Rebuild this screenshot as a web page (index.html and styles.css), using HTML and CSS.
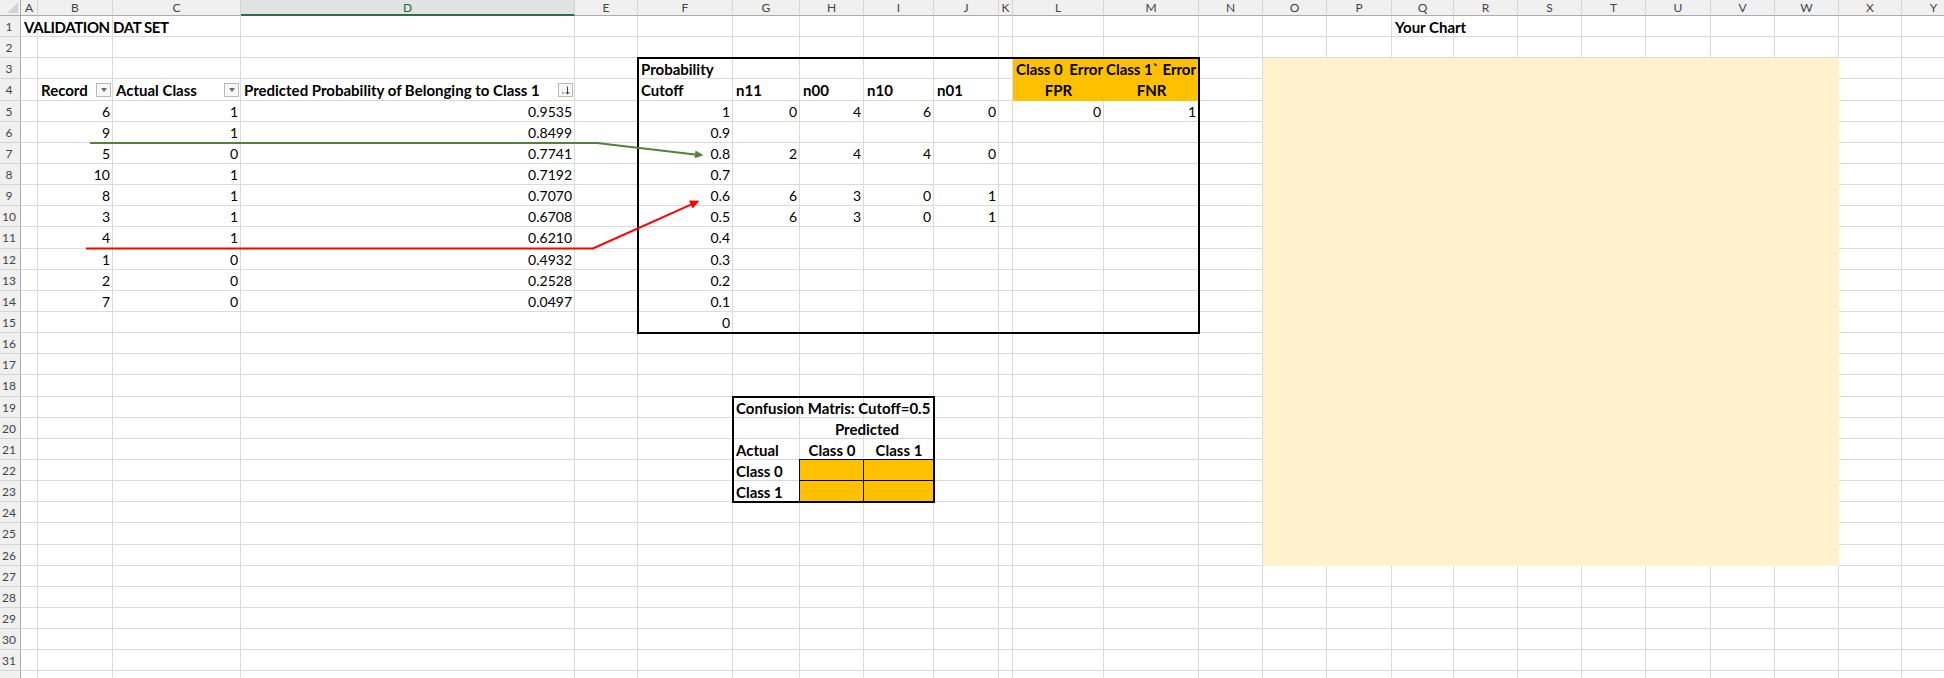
FILE: index.html
```html
<!DOCTYPE html>
<html lang="en">
<head>
<meta charset="utf-8">
<title>Validation data set</title>
<link rel="stylesheet" href="styles.css">
</head>
<body>
<div class="wrap">
<div class="sheet">
  <div class="corner"></div>
  <div class="ch cA">A</div><div class="ch cB">B</div><div class="ch cC">C</div><div class="ch cD sel">D</div><div class="ch cE">E</div><div class="ch cF">F</div><div class="ch cG">G</div><div class="ch cH">H</div><div class="ch cI">I</div><div class="ch cJ">J</div><div class="ch cK">K</div><div class="ch cL">L</div><div class="ch cM">M</div><div class="ch cN">N</div><div class="ch cO">O</div><div class="ch cP">P</div><div class="ch cQ">Q</div><div class="ch cR">R</div><div class="ch cS">S</div><div class="ch cT">T</div><div class="ch cU">U</div><div class="ch cV">V</div><div class="ch cW">W</div><div class="ch cX">X</div><div class="ch cY">Y</div>

  <div class="rh r1">1</div><div class="rh r2">2</div><div class="rh r3">3</div><div class="rh r4">4</div><div class="rh r5">5</div><div class="rh r6">6</div><div class="rh r7">7</div><div class="rh r8">8</div><div class="rh r9">9</div><div class="rh r10">10</div><div class="rh r11">11</div><div class="rh r12">12</div><div class="rh r13">13</div><div class="rh r14">14</div><div class="rh r15">15</div><div class="rh r16">16</div><div class="rh r17">17</div><div class="rh r18">18</div><div class="rh r19">19</div><div class="rh r20">20</div><div class="rh r21">21</div><div class="rh r22">22</div><div class="rh r23">23</div><div class="rh r24">24</div><div class="rh r25">25</div><div class="rh r26">26</div><div class="rh r27">27</div><div class="rh r28">28</div><div class="rh r29">29</div><div class="rh r30">30</div><div class="rh r31">31</div><div class="rh r32"></div>

  <div class="hl r1"></div><div class="hl r2"></div><div class="hl r3"></div><div class="hl r4"></div><div class="hl r5"></div><div class="hl r6"></div><div class="hl r7"></div><div class="hl r8"></div><div class="hl r9"></div><div class="hl r10"></div><div class="hl r11"></div><div class="hl r12"></div><div class="hl r13"></div><div class="hl r14"></div><div class="hl r15"></div><div class="hl r16"></div><div class="hl r17"></div><div class="hl r18"></div><div class="hl r19"></div><div class="hl r20"></div><div class="hl r21"></div><div class="hl r22"></div><div class="hl r23"></div><div class="hl r24"></div><div class="hl r25"></div><div class="hl r26"></div><div class="hl r27"></div><div class="hl r28"></div><div class="hl r29"></div><div class="hl r30"></div><div class="hl r31"></div><div class="hl r32"></div>

  <div class="vl cA"></div><div class="vl cB"></div><div class="vl cC"></div><div class="vl cD"></div><div class="vl cE"></div><div class="vl cF"></div><div class="vl cG"></div><div class="vl cH"></div><div class="vl cI"></div><div class="vl cJ"></div><div class="vl cK"></div><div class="vl cL"></div><div class="vl cM"></div><div class="vl cN"></div><div class="vl cO"></div><div class="vl cP"></div><div class="vl cQ"></div><div class="vl cR"></div><div class="vl cS"></div><div class="vl cT"></div><div class="vl cU"></div><div class="vl cV"></div><div class="vl cW"></div><div class="vl cX"></div><div class="vl cY"></div>

  <div class="chart"></div>
  <div class="orange"></div>
  <div class="ocell r22 cH"></div><div class="ocell r22 cI"></div>
  <div class="ocell r23 cH"></div><div class="ocell r23 cI"></div>

  <div class="c b title r1 cA">VALIDATION DAT SET</div>
  <div class="c b r1 cQ">Your Chart</div>

  <div class="c b hd r4 cB"><span>Record</span><span class="fbtn"></span></div>
  <div class="c b hd r4 cC"><span>Actual Class</span><span class="fbtn"></span></div>
  <div class="c b hd r4 cD"><span>Predicted Probability of Belonging to Class 1</span><span class="sbtn"><svg width="9" height="9" viewBox="0 0 9 9"><path d="M0.5 6.5 L3.5 6.5 L2 8 Z" fill="#707070"/><path d="M6.5 0.5 V8" stroke="#404040" stroke-width="1" fill="none"/><path d="M4.8 6 L6.5 8.2 L8.2 6" stroke="#404040" stroke-width="1" fill="none"/></svg></span></div>

  <div class="c n r5 cB">6</div><div class="c n r5 cC">1</div><div class="c n r5 cD">0.9535</div>
  <div class="c n r6 cB">9</div><div class="c n r6 cC">1</div><div class="c n r6 cD">0.8499</div>
  <div class="c n r7 cB">5</div><div class="c n r7 cC">0</div><div class="c n r7 cD">0.7741</div>
  <div class="c n r8 cB">10</div><div class="c n r8 cC">1</div><div class="c n r8 cD">0.7192</div>
  <div class="c n r9 cB">8</div><div class="c n r9 cC">1</div><div class="c n r9 cD">0.7070</div>
  <div class="c n r10 cB">3</div><div class="c n r10 cC">1</div><div class="c n r10 cD">0.6708</div>
  <div class="c n r11 cB">4</div><div class="c n r11 cC">1</div><div class="c n r11 cD">0.6210</div>
  <div class="c n r12 cB">1</div><div class="c n r12 cC">0</div><div class="c n r12 cD">0.4932</div>
  <div class="c n r13 cB">2</div><div class="c n r13 cC">0</div><div class="c n r13 cD">0.2528</div>
  <div class="c n r14 cB">7</div><div class="c n r14 cC">0</div><div class="c n r14 cD">0.0497</div>

  <div class="c b r3 cF">Probability</div>
  <div class="c b r4 cF">Cutoff</div>
  <div class="c b r4 cG">n11</div><div class="c b r4 cH">n00</div><div class="c b r4 cI">n10</div><div class="c b r4 cJ">n01</div>
  <div class="c b split r3 cL"><span>Class 0</span><span>Error</span></div>
  <div class="c b r3 cM tight">Class 1` Error</div>
  <div class="c b ctr r4 cL">FPR</div>
  <div class="c b ctr r4 cM">FNR</div>

  <div class="c n r5 cF">1</div><div class="c n r5 cG">0</div><div class="c n r5 cH">4</div><div class="c n r5 cI">6</div><div class="c n r5 cJ">0</div><div class="c n r5 cL">0</div><div class="c n r5 cM">1</div>
  <div class="c n r6 cF">0.9</div>
  <div class="c n r7 cF">0.8</div><div class="c n r7 cG">2</div><div class="c n r7 cH">4</div><div class="c n r7 cI">4</div><div class="c n r7 cJ">0</div>
  <div class="c n r8 cF">0.7</div>
  <div class="c n r9 cF">0.6</div><div class="c n r9 cG">6</div><div class="c n r9 cH">3</div><div class="c n r9 cI">0</div><div class="c n r9 cJ">1</div>
  <div class="c n r10 cF">0.5</div><div class="c n r10 cG">6</div><div class="c n r10 cH">3</div><div class="c n r10 cI">0</div><div class="c n r10 cJ">1</div>
  <div class="c n r11 cF">0.4</div>
  <div class="c n r12 cF">0.3</div>
  <div class="c n r13 cF">0.2</div>
  <div class="c n r14 cF">0.1</div>
  <div class="c n r15 cF">0</div>

  <div class="c b r19 cG">Confusion Matris: Cutoff=0.5</div>
  <div class="c b ctr pred">Predicted</div>
  <div class="c b r21 cG">Actual</div>
  <div class="c b ctr r21 cH">Class 0</div>
  <div class="c b ctr r21 cI">Class 1</div>
  <div class="c b r22 cG">Class 0</div>
  <div class="c b r23 cG">Class 1</div>

  <div class="box1"></div>
  <div class="box2"></div>
</div>
<svg class="arrows" width="1944" height="678" viewBox="0 0 1944 678">
  <polyline points="90,143 597,143 695,154.4" fill="none" stroke="#548235" stroke-width="2"/>
  <polygon points="703.5,155.3 694.6,158.2 695.5,150.6" fill="#548235"/>
  <polyline points="86,248.5 593,248.5 691,204.6" fill="none" stroke="#ff0000" stroke-width="2"/>
  <polygon points="699.5,200.8 692.6,208.6 689,200.5" fill="#ff0000"/>
</svg>
</div>
</body>
</html>
```

FILE: styles.css
```css
* { box-sizing: border-box; }
html, body { margin: 0; padding: 0; background: #ffffff; overflow: hidden; }

.wrap { position: relative; width: 1944px; height: 678px; overflow: hidden; }

.sheet {
  display: grid;
  width: 1966px;
  grid-template-columns: 21px 17px 75px 128px 334px 63px 95px 67px 64px 70px 65px 14px 91px 95px 64px 64px 65px 62px 64px 64px 64px 65px 64px 64px 63px 64px;
  grid-template-rows: 16px repeat(32, 21.15px);
  font-family: Lato, "Liberation Sans", sans-serif;
  font-size: 14px;
  color: #000;
}

/* rows */
.r1 { grid-row: 2; } .r2 { grid-row: 3; } .r3 { grid-row: 4; } .r4 { grid-row: 5; }
.r5 { grid-row: 6; } .r6 { grid-row: 7; } .r7 { grid-row: 8; } .r8 { grid-row: 9; }
.r9 { grid-row: 10; } .r10 { grid-row: 11; } .r11 { grid-row: 12; } .r12 { grid-row: 13; }
.r13 { grid-row: 14; } .r14 { grid-row: 15; } .r15 { grid-row: 16; } .r16 { grid-row: 17; }
.r17 { grid-row: 18; } .r18 { grid-row: 19; } .r19 { grid-row: 20; } .r20 { grid-row: 21; }
.r21 { grid-row: 22; } .r22 { grid-row: 23; } .r23 { grid-row: 24; } .r24 { grid-row: 25; }
.r25 { grid-row: 26; } .r26 { grid-row: 27; } .r27 { grid-row: 28; } .r28 { grid-row: 29; }
.r29 { grid-row: 30; } .r30 { grid-row: 31; } .r31 { grid-row: 32; } .r32 { grid-row: 33; }

/* columns */
.cA { grid-column: 2; } .cB { grid-column: 3; } .cC { grid-column: 4; } .cD { grid-column: 5; }
.cE { grid-column: 6; } .cF { grid-column: 7; } .cG { grid-column: 8; } .cH { grid-column: 9; }
.cI { grid-column: 10; } .cJ { grid-column: 11; } .cK { grid-column: 12; } .cL { grid-column: 13; }
.cM { grid-column: 14; } .cN { grid-column: 15; } .cO { grid-column: 16; } .cP { grid-column: 17; }
.cQ { grid-column: 18; } .cR { grid-column: 19; } .cS { grid-column: 20; } .cT { grid-column: 21; }
.cU { grid-column: 22; } .cV { grid-column: 23; } .cW { grid-column: 24; } .cX { grid-column: 25; }
.cY { grid-column: 26; }

/* headers */
.corner {
  grid-row: 1; grid-column: 1;
  background: linear-gradient(to bottom right, transparent 50%, #d2d2d2 50%) no-repeat right 2px bottom 2px / 11px 10px, #f0f0f0;
  border-right: 1px solid #ababab;
  border-bottom: 1px solid #ababab;
}
.ch {
  grid-row: 1;
  background: #f0f0f0;
  border-right: 1px solid #d4d4d4;
  border-bottom: 1px solid #ababab;
  text-align: center;
  font-size: 12px;
  line-height: 15px;
  color: #444;
}
.ch.sel {
  background: #e2e2e2;
  color: #1d6b40;
  border-bottom: 2px solid #217346;
}
.rh {
  grid-column: 1;
  background: #f0f0f0;
  border-right: 1px solid #ababab;
  border-bottom: 1px solid #d4d4d4;
  text-align: center;
  padding-right: 2px;
  font-size: 12px;
  line-height: 21px;
  color: #444;
}

/* gridlines */
.hl { grid-column: 2 / -1; border-bottom: 1px solid #dadada; }
.vl { grid-row: 2 / -1; border-right: 1px solid #dadada; }

/* fills */
.chart { grid-row: 4 / 28; grid-column: 16 / 25; background: #fff2cc; }
.orange { grid-row: 4 / 6; grid-column: 13 / 15; background: #ffc000; }
.ocell { background: #ffc000; border: 1px solid #000; margin: -1px 0 0 -1px; }

/* thick outlines */
.box1 { grid-row: 4 / 17; grid-column: 7 / 15; border: 2px solid #000; margin: -1px; }
.box2 { grid-row: 20 / 25; grid-column: 8 / 11; border: 2px solid #000; margin: -1px; }

/* cell text */
.c { padding: 1px 3px 0 3px; line-height: 20px; white-space: nowrap; }
.n { text-align: right; }
.b { font-weight: 700; font-size: 15px; }
.title { letter-spacing: -0.4px; }
.ctr { text-align: center; }
.split { display: flex; justify-content: space-between; padding-right: 1px; }
.tight { padding-left: 2px; }
.pred { grid-row: 21; grid-column: 9 / 11; }

.hd { display: flex; align-items: center; justify-content: space-between; padding-right: 2px; }
.fbtn, .sbtn {
  flex: none;
  width: 15px;
  height: 14px;
  border: 1px solid #b9b9b9;
  background: #f7f7f7;
  display: flex;
  align-items: center;
  justify-content: center;
}
.fbtn::before {
  content: "";
  border-left: 3.5px solid transparent;
  border-right: 3.5px solid transparent;
  border-top: 4px solid #666;
}
.sbtn svg { display: block; }

.arrows { position: absolute; left: 0; top: 0; pointer-events: none; }
```
